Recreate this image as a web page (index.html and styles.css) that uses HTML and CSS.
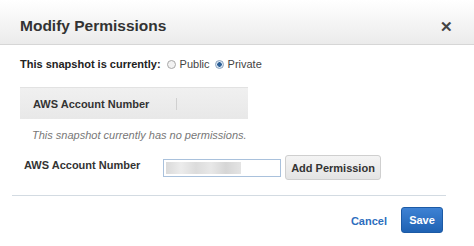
FILE: index.html
```html
<!DOCTYPE html>
<html>
<head>
<meta charset="utf-8">
<link rel="stylesheet" href="styles.css">
</head>
<body>
<div class="dialog">
  <div class="header">
    <h1 class="title">Modify Permissions</h1>
    <span class="close">&#x2715;</span>
  </div>
  <div class="body">
    <div class="status">
      <span class="status-label">This snapshot is currently:</span>
      <label class="radio"><span class="dot"></span>Public</label>
      <label class="radio"><span class="dot checked"></span>Private</label>
    </div>
    <div class="table-head">
      <span class="th">AWS Account Number</span>
      <span class="th-sep"></span>
    </div>
    <div class="empty">This snapshot currently has no permissions.</div>
    <div class="add-row">
      <span class="add-label">AWS Account Number</span>
      <span class="input"><span class="blur"></span></span>
      <span class="btn">Add Permission</span>
    </div>
  </div>
  <div class="footer">
    <span class="cancel">Cancel</span>
    <span class="save">Save</span>
  </div>
</div>
</body>
</html>
```
FILE: styles.css
```css
html, body {
  margin: 0;
  padding: 0;
  background: #fff;
  font-family: "Liberation Sans", Arial, sans-serif;
  color: #333;
}
.dialog {
  width: 474px;
  height: 246px;
  overflow: hidden;
}
.header {
  height: 44px;
  display: flex;
  align-items: center;
  justify-content: space-between;
  padding: 0 20px;
  background: linear-gradient(#ffffff, #ebebeb);
  border-bottom: 1px solid #d6d6d6;
}
.title {
  margin: 0;
  font-size: 15.5px;
  font-weight: bold;
  color: #333;
  padding-top: 8px;
}
.close {
  font-size: 15px;
  font-weight: bold;
  color: #444;
  padding-top: 9px;
  margin-right: 1px;
}
.body {
  padding: 0 20px 15px 8px;
  margin: 0 28px 0 12px;
  border-bottom: 1px solid #d3dbe2;
}
.status {
  display: flex;
  align-items: center;
  height: 16px;
  margin-top: 11px;
  font-size: 11px;
}
.status-label {
  font-weight: bold;
  color: #222;
  margin-right: 6px;
}
.radio {
  display: flex;
  align-items: center;
  color: #444;
  margin-right: 5px;
}
.dot {
  width: 7px;
  height: 7px;
  border: 1px solid #a8a8a8;
  border-radius: 50%;
  background: #f2f2f2;
  margin-right: 4px;
  box-sizing: content-box;
}
.dot.checked {
  background: radial-gradient(circle, #2c5f96 0 2px, #dce8f4 2.5px);
  border-color: #8aa2bd;
}
.table-head {
  display: flex;
  align-items: center;
  margin-top: 15px;
  width: 228px;
  height: 31px;
  background: linear-gradient(#f0f0f0, #e8e8e8);
  border-top: 1px solid #e2e2e2;
  font-size: 11px;
}
.th {
  font-weight: bold;
  color: #333;
  padding-left: 13px;
  width: 143px;
}
.th-sep {
  width: 1px;
  height: 12px;
  background: #d0d0d0;
}
.empty {
  font-size: 11px;
  font-style: italic;
  color: #777;
  padding-left: 12px;
  margin-top: 10px;
}
.add-row {
  display: flex;
  align-items: center;
  margin-top: 14px;
  font-size: 11px;
}
.add-label {
  font-weight: bold;
  color: #333;
  padding-left: 4px;
  width: 139px;
  margin-top: -6px;
}
.input {
  width: 114px;
  height: 16px;
  border: 1px solid #a9c1dc;
  background: #fff;
  display: flex;
  align-items: center;
  padding-left: 2px;
}
.blur {
  width: 75px;
  height: 12px;
  background: linear-gradient(90deg, #dadada, #ececec 20%, #dcdcdc 40%, #e8e8e8 60%, #d6d6d6 80%, #e4e4e4);
}
.btn {
  margin-left: 4px;
  width: 96px;
  height: 25px;
  box-sizing: border-box;
  border: 1px solid #cfcfcf;
  border-radius: 3px;
  background: linear-gradient(#f4f4f4, #e4e4e4);
  font-weight: bold;
  color: #333;
  display: flex;
  align-items: center;
  justify-content: center;
}
.footer {
  display: flex;
  justify-content: flex-end;
  align-items: center;
  padding: 11px 31px 0 0;
  font-size: 11px;
  font-weight: bold;
}
.cancel {
  color: #2d6ebe;
  margin-right: 14px;
  padding-top: 1px;
}
.save {
  width: 42px;
  height: 26px;
  border-radius: 3px;
  background: linear-gradient(#3e82d4, #1f62b3);
  border: 1px solid #1c5aa5;
  box-sizing: border-box;
  color: #fff;
  display: flex;
  align-items: center;
  justify-content: center;
}
```
